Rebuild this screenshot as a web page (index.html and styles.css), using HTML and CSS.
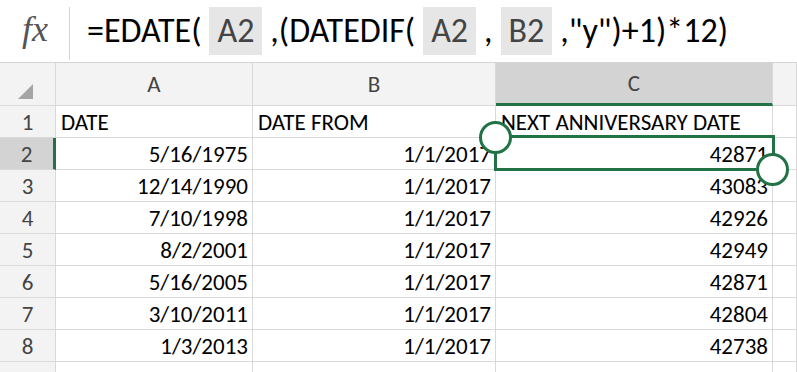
FILE: index.html
```html
<!DOCTYPE html>
<html lang="en">
<head>
    <meta charset="UTF-8">
    <title>EDATE anniversary</title>
    <link rel="stylesheet" href="styles.css">
</head>
<body>
    <div class="formula-bar">
        <div class="fx"><span>fx</span></div>
        <div class="formula">=EDATE(<span class="ref">A2</span>,(DATEDIF(<span class="ref">A2</span>,<span class="ref">B2</span>,"y")+1)*12)</div>
    </div>

    <div class="sheet">
        <div class="hd corner"><span class="tri"></span></div>
        <div class="hd">A</div>
        <div class="hd">B</div>
        <div class="hd sel-col">C</div>
        <div class="hd"></div>

        <div class="rh">1</div>
        <div class="c">DATE</div>
        <div class="c">DATE FROM</div>
        <div class="c">NEXT ANNIVERSARY DATE</div>
        <div class="c"></div>

        <div class="rh sel-row">2</div>
        <div class="c n">5/16/1975</div>
        <div class="c n">1/1/2017</div>
        <div class="c n active">42871
            <span class="sel-box"></span>
            <span class="handle tl"></span>
            <span class="handle br"></span>
        </div>
        <div class="c"></div>

        <div class="rh">3</div>
        <div class="c n">12/14/1990</div>
        <div class="c n">1/1/2017</div>
        <div class="c n">43083</div>
        <div class="c"></div>

        <div class="rh">4</div>
        <div class="c n">7/10/1998</div>
        <div class="c n">1/1/2017</div>
        <div class="c n">42926</div>
        <div class="c"></div>

        <div class="rh">5</div>
        <div class="c n">8/2/2001</div>
        <div class="c n">1/1/2017</div>
        <div class="c n">42949</div>
        <div class="c"></div>

        <div class="rh">6</div>
        <div class="c n">5/16/2005</div>
        <div class="c n">1/1/2017</div>
        <div class="c n">42871</div>
        <div class="c"></div>

        <div class="rh">7</div>
        <div class="c n">3/10/2011</div>
        <div class="c n">1/1/2017</div>
        <div class="c n">42804</div>
        <div class="c"></div>

        <div class="rh">8</div>
        <div class="c n">1/3/2013</div>
        <div class="c n">1/1/2017</div>
        <div class="c n">42738</div>
        <div class="c"></div>

        <div class="rh"></div>
        <div class="c"></div>
        <div class="c"></div>
        <div class="c"></div>
        <div class="c"></div>
    </div>
</body>
</html>
```

FILE: styles.css
```css
html, body { height: 372px; overflow: hidden; }
body { margin: 0; background: #fff; font-family: "Carlito", "Open Sans", sans-serif; color: #000; }

.formula-bar { display: flex; height: 62px; border-bottom: 1px solid #d4d4d4; }
.fx { width: 70px; display: flex; align-items: center; justify-content: center; position: relative; }
.fx span { font-family: "Liberation Serif", serif; font-style: italic; font-size: 36px; color: #555; margin-top: -4px; }
.fx::after { content: ""; position: absolute; right: 0; top: 7px; bottom: 2px; border-right: 1px solid #d4d4d4; }
.formula { display: flex; align-items: stretch; padding: 7px 0 7px 17px; font-size: 34px; line-height: 48px; white-space: pre; }
.ref { background: #e6e6e6; color: #444; padding: 0 8px; margin: 0 8px; }

.sheet { display: grid; grid-template-columns: 56px 197px 243px 277px 1fr; grid-template-rows: 43px repeat(8, 32px) 11px; }
.sheet > div { box-sizing: border-box; border-right: 1px solid #d9d9d9; border-bottom: 1px solid #d9d9d9; display: flex; align-items: center; font-size: 23px; white-space: nowrap; }

.hd { background: #f3f3f3; justify-content: center; color: #444; font-size: 20px; }
.hd.sel-col { background: #d3d3d3; border-bottom: 3px solid #217346; }
.corner { position: relative; }
.tri { position: absolute; left: 18px; top: 21px; width: 0; height: 0; border-left: 15px solid transparent; border-bottom: 15px solid #a5a5a5; }

.rh { background: #f3f3f3; justify-content: center; color: #444; font-size: 22px; }
.rh.sel-row { background: #d3d3d3; border-right: 3px solid #217346; }

.c { padding: 1px 4px 0 5px; }
.c.n { justify-content: flex-end; }
.active { position: relative; }

.sel-box { position: absolute; left: -2px; top: -3px; width: 281px; height: 36px; box-sizing: border-box; border: 3px solid #217346; }
.handle { position: absolute; width: 33px; height: 33px; box-sizing: border-box; border-radius: 50%; border: 3px solid #217346; background: #fff; }
.handle.tl { left: -17px; top: -17px; }
.handle.br { right: -17px; bottom: -17px; }
```
